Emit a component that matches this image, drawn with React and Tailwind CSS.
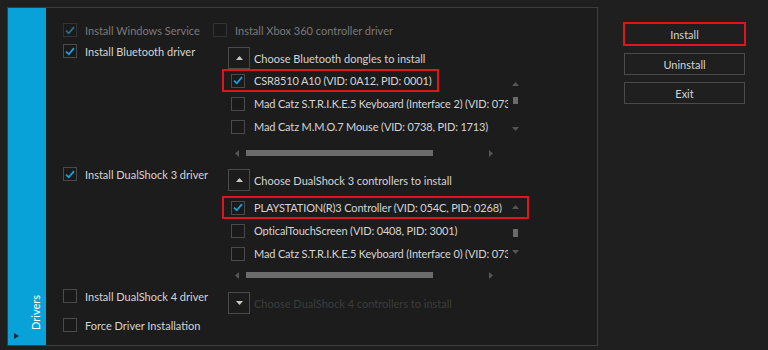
import React from 'react';

const font = { fontFamily: 'Lato, "Open Sans", sans-serif' };

const Check = ({ checked, disabled }) => (
    <span
        className={`flex h-[14px] w-[14px] shrink-0 items-center justify-center border ${
            disabled ? 'border-[#333]' : 'border-[#4a4a4a]'
        } bg-[#1a1a1a]`}
    >
        {checked && (
            <svg width="10" height="9" viewBox="0 0 10 9">
                <path
                    d="M1 4.6 L3.8 7.3 L9 1.2"
                    fill="none"
                    stroke={disabled ? '#2c6e8c' : '#1ba1e2'}
                    strokeWidth="1.8"
                />
            </svg>
        )}
    </span>
);

const Option = ({ label, checked, disabled }) => (
    <div className="flex h-[16px] items-center gap-[8px] whitespace-nowrap">
        <Check checked={checked} disabled={disabled} />
        <span className={disabled ? 'text-[#7a7a7a]' : 'text-[#d4d4d4]'}>{label}</span>
    </div>
);

const Arrow = ({ dir = 'up', color = '#6a6a6a' }) => {
    const paths = {
        up: 'M0 5 L3.5 1 L7 5 Z',
        down: 'M0 1 L3.5 5 L7 1 Z',
        left: 'M5 0 L1 3.5 L5 7 Z',
        right: 'M1 0 L5 3.5 L1 7 Z'
    };
    return (
        <svg width="7" height="7" viewBox="0 0 7 7" className="shrink-0">
            <path d={paths[dir]} fill={color} />
        </svg>
    );
};

const Expander = ({ title, open, disabled }) => (
    <div className="flex h-[22px] items-center gap-[4px] whitespace-nowrap">
        <span className="flex h-[22px] w-[22px] items-center justify-center border border-[#4a4a4a]">
            <Arrow dir={open ? 'up' : 'down'} color="#c8c8c8" />
        </span>
        <span className={disabled ? 'text-[#3d3d3d]' : 'text-[#d4d4d4]'}>{title}</span>
    </div>
);

const DeviceList = ({ items, marked, bar }) => (
    <div className="w-[295px]">
        <div className="flex">
            <div className="w-[280px]">
                {items.map((item, i) => (
                    <div key={item.label} className="relative flex h-[23px] items-center gap-[9px] pl-[3px]">
                        <Check checked={item.checked} />
                        <span className="min-w-0 flex-1 overflow-hidden whitespace-nowrap tracking-[-0.15px] text-[#d4d4d4]">
                            {item.label}
                        </span>
                        {i === 0 && (
                            <span className={`pointer-events-none absolute top-0 left-[-6px] h-[23px] ${marked} border-2 border-[#e0141c]`} />
                        )}
                    </div>
                ))}
            </div>
            <div className="flex w-[15px] flex-col items-center">
                <span className={bar.up}>
                    <Arrow dir="up" color="#555" />
                </span>
                <span className={`${bar.thumb} w-[5px] bg-[#6a6a6a]`} />
                <span className={bar.down}>
                    <Arrow dir="down" color="#555" />
                </span>
            </div>
        </div>
        <div className={`${bar.hmt} flex h-[14px] items-center pl-[6px]`}>
            <Arrow dir="left" color="#555" />
            <span className="ml-[5px] h-[6px] w-[187px] bg-[#6b6b6b]" />
            <span className="ml-[55px]">
                <Arrow dir="right" color="#555" />
            </span>
        </div>
    </div>
);

const Button = ({ label, highlight }) => (
    <div
        className={`flex items-center justify-center text-[#d4d4d4] ${
            highlight
                ? 'h-[24px] w-[123px] border-2 border-[#e0141c]'
                : 'mx-[1px] h-[22px] w-[121px] border border-[#4a4a4a]'
        }`}
    >
        {label}
    </div>
);

export default function App() {
    return (
        <div className="flex h-[350px] w-[768px] bg-[#1f1f1f] text-[11px] leading-none" style={font}>
            <div className="mt-[7px] ml-[7px] flex h-[339px] w-[591px] border border-[#3d3d3d] bg-[#1c1c1c]">
                <div className="relative w-[38px] bg-[#08a2d8]">
                    <span className="absolute bottom-[15px] left-[33px] origin-bottom-left -rotate-90 text-[11px] whitespace-nowrap text-white">
                        Drivers
                    </span>
                    <span className="absolute bottom-[6px] left-[6px]">
                        <svg width="5" height="6" viewBox="0 0 5 6">
                            <path d="M0 0 L5 3 L0 6 Z" fill="#0b2a40" />
                        </svg>
                    </span>
                </div>
                <div className="flex flex-col pt-[14px] pl-[17px]">
                    <div className="flex">
                        <div className="w-[150px]">
                            <Option label="Install Windows Service" checked disabled />
                        </div>
                        <Option label="Install Xbox 360 controller driver" disabled />
                    </div>

                    <div className="mt-[5px] flex">
                        <div className="w-[165px]">
                            <Option label="Install Bluetooth driver" checked />
                        </div>
                        <div className="pt-[4px]">
                            <Expander title="Choose Bluetooth dongles to install" open />
                            <DeviceList
                                marked="w-[217px]"
                                bar={{ up: 'mt-[12px]', thumb: 'mt-[9px] h-[7px]', down: 'mt-[22px]', hmt: 'mt-[8px]' }}
                                items={[
                                    { label: 'CSR8510 A10 (VID: 0A12, PID: 0001)', checked: true },
                                    { label: 'Mad Catz S.T.R.I.K.E.5 Keyboard (Interface 2) (VID: 0738, PID: 1713)' },
                                    { label: 'Mad Catz M.M.O.7 Mouse (VID: 0738, PID: 1713)' }
                                ]}
                            />
                        </div>
                    </div>

                    <div className="mt-[6px] flex">
                        <div className="w-[165px]">
                            <Option label="Install DualShock 3 driver" checked />
                        </div>
                        <div className="pt-[3px]">
                            <Expander title="Choose DualShock 3 controllers to install" open />
                            <div className="mt-[5px]">
                                <DeviceList
                                    marked="w-[307px]"
                                    bar={{ up: 'mt-[8px]', thumb: 'mt-[18px] h-[8px]', down: 'mt-[12px]', hmt: 'mt-[3px]' }}
                                    items={[
                                        { label: 'PLAYSTATION(R)3 Controller (VID: 054C, PID: 0268)', checked: true },
                                        { label: 'OpticalTouchScreen (VID: 0408, PID: 3001)' },
                                        { label: 'Mad Catz S.T.R.I.K.E.5 Keyboard (Interface 0) (VID: 0738, PID: 1713)' }
                                    ]}
                                />
                            </div>
                        </div>
                    </div>

                    <div className="mt-[6px] flex">
                        <div className="w-[165px]">
                            <Option label="Install DualShock 4 driver" />
                        </div>
                        <div className="pt-[4px]">
                            <Expander title="Choose DualShock 4 controllers to install" disabled />
                        </div>
                    </div>

                    <div className="mt-[3px]">
                        <Option label="Force Driver Installation" />
                    </div>
                </div>
            </div>
            <div className="ml-[25px] flex flex-col gap-[7px] pt-[22px]">
                <Button label="Install" highlight />
                <Button label="Uninstall" />
                <Button label="Exit" />
            </div>
        </div>
    );
}
